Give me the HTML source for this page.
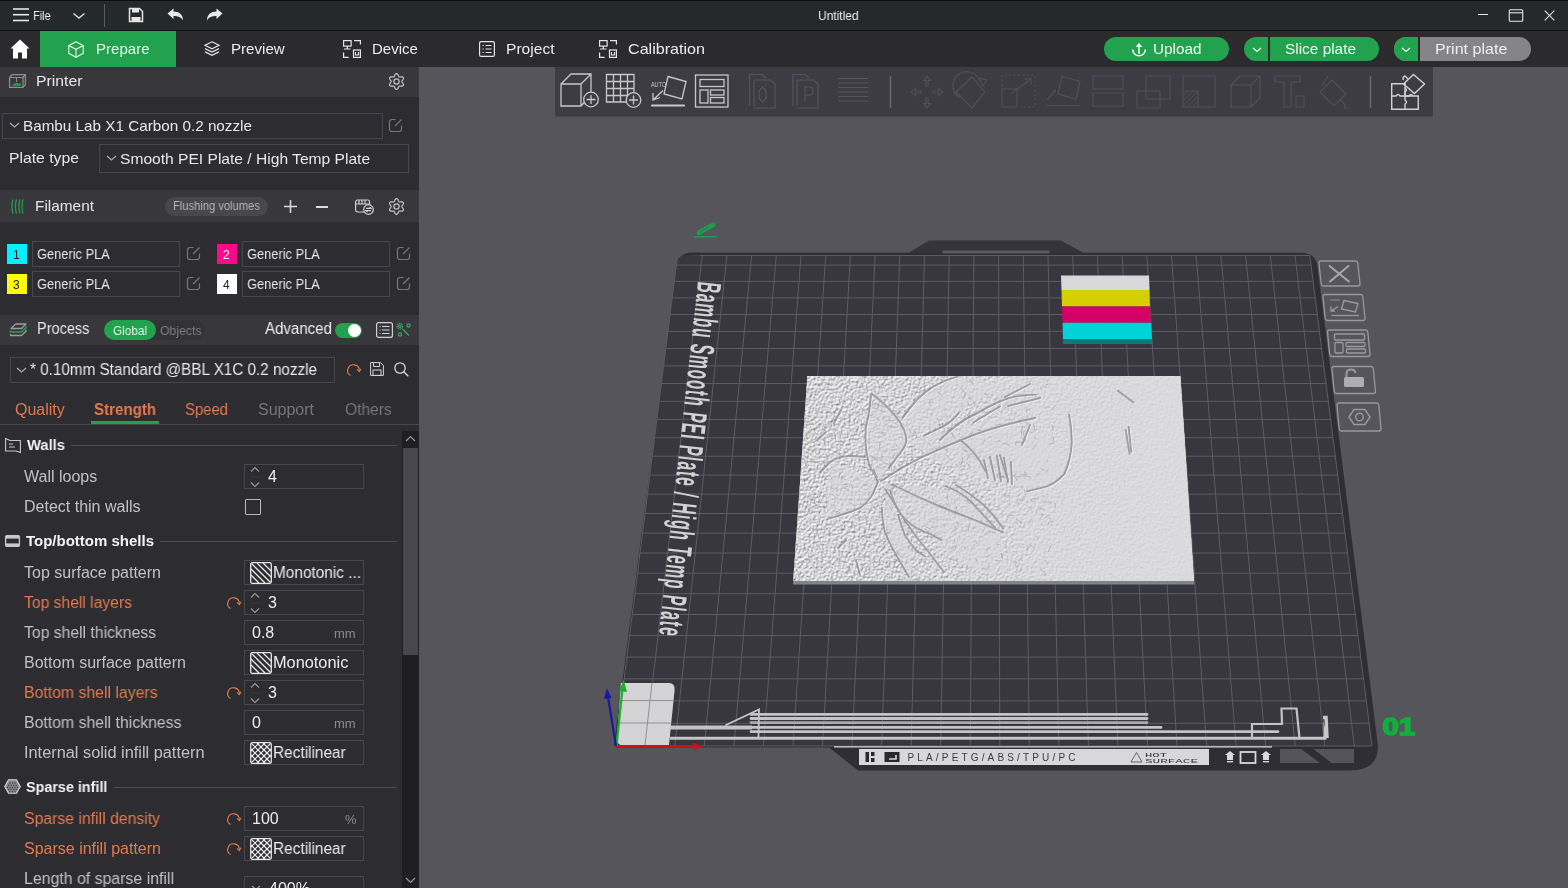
<!DOCTYPE html>
<html><head><meta charset="utf-8">
<style>
*{margin:0;padding:0;box-sizing:border-box}
html,body{width:1568px;height:888px;overflow:hidden;background:#57555c;font-family:"Liberation Sans",sans-serif;}
.a{position:absolute}
#title{left:0;top:0;width:1568px;height:30px;background:#25282a}
#tsep{left:0;top:30px;width:1568px;height:1px;background:#111213}
#tabs{left:0;top:31px;width:1568px;height:36px;background:#2b2b2e}
#left{left:0;top:67px;width:419px;height:821px;background:#2c2b30}
.t{position:absolute;white-space:nowrap;line-height:1;will-change:transform}
.hdr{position:absolute;left:0;width:419px;height:31px;background:#37363b}
.box{position:absolute;border:1px solid #48474d}
.lbl{position:absolute;white-space:nowrap;line-height:1;font-size:15px;color:#bcbcbc}
.org{color:#e27a4f}
.val{position:absolute;white-space:nowrap;line-height:1;font-size:15px;color:#e6e6e6}
svg{position:absolute;overflow:visible}
</style></head><body>
<div class="a" style="left:0px;top:0px;width:1568px;height:30px;background:#26292b;"></div>
<div class="a" style="left:0px;top:30px;width:1568px;height:1px;background:#121314;"></div>
<div class="a" style="left:0px;top:31px;width:1568px;height:36px;background:#2b2b2e;"></div>
<svg style="left:13px;top:8px" width="17" height="14" viewBox="0 0 17 14"><g stroke="#e8e8e8" stroke-width="1.6"><line x1="0" y1="1" x2="16" y2="1"/><line x1="0" y1="6.7" x2="16" y2="6.7"/><line x1="0" y1="12.5" x2="16" y2="12.5"/></g></svg>
<div class="t" style="left:33.4px;top:9.2px;font-size:13px;color:#f0f0f0;transform:scaleX(0.840);transform-origin:0 0;">File</div>
<svg style="left:73px;top:13px" width="13" height="6" viewBox="0 0 13 6"><polyline points="0.5,0.5 6,5 11.5,0.5" fill="none" stroke="#dcdcdc" stroke-width="1.4"/></svg>
<div class="a" style="left:104px;top:4px;width:1px;height:23px;background:#5a5c5e;"></div>
<svg style="left:128px;top:7px" width="16" height="16" viewBox="0 0 16 16"><path d="M1.5 1.5h10l3 3v10h-13z" fill="none" stroke="#e6e6e6" stroke-width="1.5"/><rect x="4" y="1.5" width="7" height="4" fill="#e6e6e6"/><rect x="3.5" y="10" width="9" height="4.5" fill="#e6e6e6"/></svg>
<svg style="left:167px;top:8px" width="17" height="13" viewBox="0 0 17 13"><path d="M0.5 5.5L6.5 0.5V3.5C12 3.5 16 6.5 16 12.5C14 9 11 8 6.5 8V11z" fill="#e8e8e8"/></svg>
<svg style="left:206px;top:8px" width="17" height="13" viewBox="0 0 17 13"><path d="M16.5 5.5L10.5 0.5V3.5C5 3.5 1 6.5 1 12.5C3 9 6 8 10.5 8V11z" fill="#e8e8e8"/></svg>
<div class="t" style="left:817.7px;top:9.3px;font-size:13px;color:#eeeeee;transform:scaleX(0.923);transform-origin:0 0;">Untitled</div>
<div class="a" style="left:1478px;top:13.8px;width:10px;height:1.2px;background:#e8e8e8;"></div>
<div class="a" style="left:0px;top:0px;width:1568px;height:1px;background:#0c0c0d;"></div>
<svg style="left:1508px;top:8.5px" width="16" height="13" viewBox="0 0 16 13"><g fill="none" stroke="#e8e8e8" stroke-width="1.1"><rect x="1.3" y="0.7" width="13.4" height="11.6" rx="1"/><path d="M1.3 3.8H14.7"/></g></svg>
<svg style="left:1544px;top:10px" width="11" height="11" viewBox="0 0 11 11"><g stroke="#e0e0e0" stroke-width="1.1"><line x1="0.7" y1="0.7" x2="10.3" y2="10.3"/><line x1="10.3" y1="0.7" x2="0.7" y2="10.3"/></g></svg>
<svg style="left:10px;top:39px" width="20" height="20" viewBox="0 0 20 20"><path d="M10 0.5L0.5 9.5H3V19.5H8V13.5H12V19.5H17V9.5H19.5z" fill="#ffffff"/></svg>
<div class="a" style="left:40px;top:31px;width:136px;height:36px;background:#22a14f;"></div>
<svg style="left:68px;top:41px" width="16" height="17" viewBox="0 0 16 17"><g fill="none" stroke="#d9f5dc" stroke-width="1.2"><path d="M8 0.8L15.2 4.6V12.4L8 16.2L0.8 12.4V4.6z"/><path d="M0.8 4.6L8 8.4L15.2 4.6M8 8.4V16.2"/></g></svg>
<div class="t" style="left:95.7px;top:41.3px;font-size:15px;color:#e2f7e4;transform:scaleX(1.003);transform-origin:0 0;">Prepare</div>
<svg style="left:204px;top:41px" width="16" height="16" viewBox="0 0 16 16"><g fill="none" stroke="#e6e6e6" stroke-width="1.2"><path d="M8 0.8L15 4.3L8 7.8L1 4.3z"/><path d="M1 7.6L8 11.1L15 7.6"/><path d="M1 10.9L8 14.4L15 10.9"/></g></svg>
<div class="t" style="left:231.4px;top:41.3px;font-size:15px;color:#ececec;transform:scaleX(1.008);transform-origin:0 0;">Preview</div>
<svg style="left:343px;top:40px" width="18" height="18" viewBox="0 0 18 18"><g fill="none" stroke="#e6e6e6" stroke-width="1.2"><rect x="0.6" y="0.6" width="7.5" height="5.5"/><path d="M4.3 6.1V9M1 9h6.5"/><path d="M11 0.6h6.4v4M0.6 12.5v4.8h5"/><rect x="10.5" y="10" width="6.9" height="7.4"/><path d="M12.5 12v3h3v-3"/></g></svg>
<div class="t" style="left:371.5px;top:41.3px;font-size:15px;color:#ececec;transform:scaleX(0.992);transform-origin:0 0;">Device</div>
<svg style="left:479px;top:41px" width="16" height="16" viewBox="0 0 16 16"><g fill="none" stroke="#e6e6e6" stroke-width="1.2"><rect x="0.6" y="0.6" width="14.8" height="14.8" rx="1.5"/><path d="M3.5 4.5h1.2M6.5 4.5h6M3.5 8h1.2M6.5 8h6M3.5 11.5h1.2M6.5 11.5h6"/></g></svg>
<div class="t" style="left:506.0px;top:41.3px;font-size:15px;color:#ececec;transform:scaleX(1.039);transform-origin:0 0;">Project</div>
<svg style="left:599px;top:40px" width="18" height="18" viewBox="0 0 18 18"><g fill="none" stroke="#e6e6e6" stroke-width="1.2"><rect x="0.6" y="0.6" width="7.5" height="5.5"/><path d="M4.3 6.1V9M1 9h6.5"/><path d="M11 0.6h6.4v4M0.6 12.5v4.8h5"/><rect x="10.5" y="10" width="6.9" height="7.4"/><path d="M12.5 12v3h3v-3"/></g></svg>
<div class="t" style="left:628.0px;top:41.3px;font-size:15px;color:#ececec;transform:scaleX(1.074);transform-origin:0 0;">Calibration</div>
<div class="a" style="left:1104px;top:37px;width:125px;height:24px;border-radius:12px;background:#22a14f"></div>
<svg style="left:1131px;top:42px" width="16" height="15" viewBox="0 0 16 15"><g fill="none" stroke="#eef8ee" stroke-width="1.6"><path d="M1.7 7.5A6.3 6.3 0 0 0 14.3 7.5"/><path d="M8 12V3.5"/></g><path d="M4.6 5L8 0.8L11.4 5z" fill="#eef8ee"/></svg>
<div class="t" style="left:1152.5px;top:41.2px;font-size:15px;color:#f4f4f4;transform:scaleX(1.020);transform-origin:0 0;">Upload</div>
<div class="a" style="left:1244px;top:37px;width:135px;height:24px;border-radius:12px;background:#22a14f"></div>
<div class="a" style="left:1268px;top:37px;width:2px;height:24px;background:#2b2b2e;"></div>
<svg style="left:1252px;top:47px" width="10" height="6" viewBox="0 0 10 6"><polyline points="1,1 5,4.5 9,1" fill="none" stroke="#f0f0f0" stroke-width="1.3"/></svg>
<div class="t" style="left:1285.0px;top:41.2px;font-size:15px;color:#f4f4f4;transform:scaleX(1.026);transform-origin:0 0;">Slice plate</div>
<div class="a" style="left:1394px;top:37px;width:137px;height:24px;border-radius:12px;background:#858487"></div>
<div class="a" style="left:1394px;top:37px;width:24px;height:24px;border-radius:12px 0 0 12px;background:#22a14f"></div>
<div class="a" style="left:1418px;top:37px;width:2px;height:24px;background:#2b2b2e;"></div>
<svg style="left:1401px;top:47px" width="10" height="6" viewBox="0 0 10 6"><polyline points="1,1 5,4.5 9,1" fill="none" stroke="#f0f0f0" stroke-width="1.3"/></svg>
<div class="t" style="left:1435.4px;top:41.2px;font-size:15px;color:#eeeeee;transform:scaleX(1.071);transform-origin:0 0;">Print plate</div>
<div class="a" style="left:0px;top:67px;width:419px;height:821px;background:#2d2c31;"></div>
<div class="a" style="left:0px;top:67px;width:419px;height:30px;background:#38373c;"></div>
<svg style="left:9px;top:74px" width="17" height="14" viewBox="0 0 17 14"><g fill="none" stroke="#8e8e92" stroke-width="1.2"><path d="M0.6 3.5L3 0.6H16.4V10.5L14 13.4H0.6z"/><path d="M0.6 3.5H14V13.4M14 3.5L16.4 0.6"/></g><path d="M3 11.5Q6 8 10 9.5H12V11.8H3z" fill="#22a14f"/><path d="M7.5 3.5V8" stroke="#8e8e92" stroke-width="1"/></svg>
<div class="t" style="left:35.5px;top:73.3px;font-size:15px;color:#e6e6e6;transform:scaleX(1.053);transform-origin:0 0;">Printer</div>
<svg style="left:388px;top:73px" width="17" height="17" viewBox="0 0 17 17"><g fill="none" stroke="#c2c2c2" stroke-width="1.2"><polygon points="13.85,8.50 14.00,8.98 14.38,9.54 14.88,10.21 15.29,10.97 15.46,11.75 15.30,12.42 14.79,12.91 14.03,13.14 13.17,13.17 12.34,13.08 11.66,13.02 11.18,13.13 10.83,13.50 10.54,14.11 10.21,14.88 9.75,15.62 9.17,16.15 8.50,16.35 7.83,16.15 7.25,15.62 6.79,14.88 6.46,14.11 6.17,13.50 5.83,13.13 5.34,13.02 4.66,13.08 3.83,13.17 2.97,13.14 2.21,12.91 1.70,12.43 1.54,11.75 1.71,10.97 2.12,10.21 2.62,9.54 3.00,8.98 3.15,8.50 3.00,8.02 2.62,7.46 2.12,6.79 1.71,6.03 1.54,5.25 1.70,4.57 2.21,4.09 2.97,3.86 3.83,3.83 4.66,3.92 5.34,3.98 5.82,3.87 6.17,3.50 6.46,2.89 6.79,2.12 7.25,1.38 7.83,0.85 8.50,0.65 9.17,0.85 9.75,1.38 10.21,2.12 10.54,2.89 10.83,3.50 11.17,3.87 11.66,3.98 12.34,3.92 13.17,3.83 14.03,3.86 14.79,4.09 15.30,4.58 15.46,5.25 15.29,6.03 14.88,6.79 14.38,7.46 14.00,8.02 13.85,8.50"/><circle cx="8.5" cy="8.5" r="2.6"/></g></svg>
<div class="box" style="left:2px;top:113px;width:381px;height:26px"></div>
<svg style="left:9px;top:122px" width="12" height="7" viewBox="0 0 12 7"><polyline points="1,1 5.5,5 10,1" fill="none" stroke="#b0b0b0" stroke-width="1.1"/></svg>
<div class="t" style="left:23.4px;top:118.3px;font-size:15px;color:#e8e8e8;transform:scaleX(1.017);transform-origin:0 0;">Bambu Lab X1 Carbon 0.2 nozzle</div>
<svg style="left:388px;top:118px" width="15" height="15" viewBox="0 0 15 15"><g fill="none" stroke="#77767b" stroke-width="1.2"><path d="M7.5 1.5H4Q1.5 1.5 1.5 4V11Q1.5 13.5 4 13.5H11Q13.5 13.5 13.5 11V7.5"/><path d="M7 8L13.5 1.5"/></g></svg>
<div class="t" style="left:9.4px;top:150.1px;font-size:15px;color:#e8e8e8;transform:scaleX(1.049);transform-origin:0 0;">Plate type</div>
<div class="box" style="left:99px;top:144px;width:310px;height:29px"></div>
<svg style="left:106px;top:155px" width="12" height="7" viewBox="0 0 12 7"><polyline points="1,1 5.5,5 10,1" fill="none" stroke="#b0b0b0" stroke-width="1.1"/></svg>
<div class="t" style="left:119.5px;top:151.1px;font-size:15px;color:#e8e8e8;transform:scaleX(1.039);transform-origin:0 0;">Smooth PEI Plate / High Temp Plate</div>
<div class="a" style="left:0px;top:190px;width:419px;height:32px;background:#38373c;"></div>
<svg style="left:10px;top:198px" width="14" height="17" viewBox="0 0 14 17"><g fill="none" stroke="#22a14f" stroke-width="1.3"><path d="M3 1.5Q0.8 8.5 3 15.5M6.5 1.5Q4.3 8.5 6.5 15.5M10 1.5Q7.8 8.5 10 15.5M13 1.5Q11 8.5 13 15.5"/></g></svg>
<div class="t" style="left:35.0px;top:198.3px;font-size:15px;color:#e6e6e6;transform:scaleX(1.026);transform-origin:0 0;">Filament</div>
<div class="a" style="left:165px;top:197px;width:103px;height:19px;border-radius:9.5px;background:#48474c"></div>
<div class="t" style="left:173.0px;top:199.8px;font-size:12px;color:#b5b5b5;transform:scaleX(0.930);transform-origin:0 0;">Flushing volumes</div>
<svg style="left:284px;top:200px" width="13" height="13" viewBox="0 0 13 13"><g stroke="#dedede" stroke-width="1.5"><line x1="6.5" y1="0" x2="6.5" y2="13"/><line x1="0" y1="6.5" x2="13" y2="6.5"/></g></svg>
<div class="a" style="left:316px;top:206px;width:12px;height:1.5px;background:#dedede;"></div>
<svg style="left:355px;top:198px" width="19" height="17" viewBox="0 0 19 17"><g fill="none" stroke="#d0d0d0" stroke-width="1.2"><rect x="0.6" y="2" width="14" height="12" rx="2"/><path d="M0.6 6H14.6M4 2V6M7 2V6M10 2V6"/><circle cx="13.5" cy="11.5" r="4.8" fill="#37363b"/><path d="M11 10.3H16L14.5 9M16 12.7H11L12.5 14"/></g></svg>
<svg style="left:388px;top:198px" width="17" height="17" viewBox="0 0 17 17"><g fill="none" stroke="#c2c2c2" stroke-width="1.2"><polygon points="13.85,8.50 14.00,8.98 14.38,9.54 14.88,10.21 15.29,10.97 15.46,11.75 15.30,12.42 14.79,12.91 14.03,13.14 13.17,13.17 12.34,13.08 11.66,13.02 11.18,13.13 10.83,13.50 10.54,14.11 10.21,14.88 9.75,15.62 9.17,16.15 8.50,16.35 7.83,16.15 7.25,15.62 6.79,14.88 6.46,14.11 6.17,13.50 5.83,13.13 5.34,13.02 4.66,13.08 3.83,13.17 2.97,13.14 2.21,12.91 1.70,12.43 1.54,11.75 1.71,10.97 2.12,10.21 2.62,9.54 3.00,8.98 3.15,8.50 3.00,8.02 2.62,7.46 2.12,6.79 1.71,6.03 1.54,5.25 1.70,4.57 2.21,4.09 2.97,3.86 3.83,3.83 4.66,3.92 5.34,3.98 5.82,3.87 6.17,3.50 6.46,2.89 6.79,2.12 7.25,1.38 7.83,0.85 8.50,0.65 9.17,0.85 9.75,1.38 10.21,2.12 10.54,2.89 10.83,3.50 11.17,3.87 11.66,3.98 12.34,3.92 13.17,3.83 14.03,3.86 14.79,4.09 15.30,4.58 15.46,5.25 15.29,6.03 14.88,6.79 14.38,7.46 14.00,8.02 13.85,8.50"/><circle cx="8.5" cy="8.5" r="2.6"/></g></svg>
<div class="a" style="left:7px;top:244px;width:20px;height:20px;background:#00f0fc;"></div>
<div class="t" style="left:13.3px;top:248.8px;font-size:12px;color:#222;">1</div>
<div class="box" style="left:32px;top:241px;width:148px;height:26px"></div>
<div class="t" style="left:37.0px;top:246.1px;font-size:15px;color:#e6e6e6;transform:scaleX(0.856);transform-origin:0 0;">Generic PLA</div>
<svg style="left:186px;top:246px" width="15" height="15" viewBox="0 0 15 15"><g fill="none" stroke="#77767b" stroke-width="1.2"><path d="M7.5 1.5H4Q1.5 1.5 1.5 4V11Q1.5 13.5 4 13.5H11Q13.5 13.5 13.5 11V7.5"/><path d="M7 8L13.5 1.5"/></g></svg>
<div class="a" style="left:217px;top:244px;width:20px;height:20px;background:#fc0a8a;"></div>
<div class="t" style="left:223.3px;top:248.8px;font-size:12px;color:#fff;">2</div>
<div class="box" style="left:242px;top:241px;width:148px;height:26px"></div>
<div class="t" style="left:247.0px;top:246.1px;font-size:15px;color:#e6e6e6;transform:scaleX(0.856);transform-origin:0 0;">Generic PLA</div>
<svg style="left:396px;top:246px" width="15" height="15" viewBox="0 0 15 15"><g fill="none" stroke="#77767b" stroke-width="1.2"><path d="M7.5 1.5H4Q1.5 1.5 1.5 4V11Q1.5 13.5 4 13.5H11Q13.5 13.5 13.5 11V7.5"/><path d="M7 8L13.5 1.5"/></g></svg>
<div class="a" style="left:7px;top:274px;width:20px;height:20px;background:#fcfc00;"></div>
<div class="t" style="left:13.3px;top:278.8px;font-size:12px;color:#222;">3</div>
<div class="box" style="left:32px;top:271px;width:148px;height:26px"></div>
<div class="t" style="left:37.0px;top:276.1px;font-size:15px;color:#e6e6e6;transform:scaleX(0.856);transform-origin:0 0;">Generic PLA</div>
<svg style="left:186px;top:276px" width="15" height="15" viewBox="0 0 15 15"><g fill="none" stroke="#77767b" stroke-width="1.2"><path d="M7.5 1.5H4Q1.5 1.5 1.5 4V11Q1.5 13.5 4 13.5H11Q13.5 13.5 13.5 11V7.5"/><path d="M7 8L13.5 1.5"/></g></svg>
<div class="a" style="left:217px;top:274px;width:20px;height:20px;background:#ffffff;"></div>
<div class="t" style="left:223.3px;top:278.8px;font-size:12px;color:#222;">4</div>
<div class="box" style="left:242px;top:271px;width:148px;height:26px"></div>
<div class="t" style="left:247.0px;top:276.1px;font-size:15px;color:#e6e6e6;transform:scaleX(0.856);transform-origin:0 0;">Generic PLA</div>
<svg style="left:396px;top:276px" width="15" height="15" viewBox="0 0 15 15"><g fill="none" stroke="#77767b" stroke-width="1.2"><path d="M7.5 1.5H4Q1.5 1.5 1.5 4V11Q1.5 13.5 4 13.5H11Q13.5 13.5 13.5 11V7.5"/><path d="M7 8L13.5 1.5"/></g></svg>
<div class="a" style="left:0px;top:315px;width:419px;height:30px;background:#38373c;"></div>
<svg style="left:9px;top:321px" width="18" height="17" viewBox="0 0 18 17"><g fill="none" stroke-width="1.3" stroke-linejoin="round"><path d="M2 7.5L6.5 3H17L12.5 7.5z" stroke="#9a9a9e"/><path d="M1.5 9.5V11H12.5L17 6.8V5.5" stroke="#22a14f" stroke-width="1.6"/><path d="M1.5 13V14.5H12.5L17 10.3V9" stroke="#9a9a9e"/></g></svg>
<div class="t" style="left:37.3px;top:320.7px;font-size:16px;color:#e6e6e6;transform:scaleX(0.907);transform-origin:0 0;">Process</div>
<div class="a" style="left:104px;top:320px;width:101px;height:20px;border-radius:10px;background:#333237"></div>
<div class="a" style="left:104px;top:320px;width:52px;height:20px;border-radius:10px;background:#22a14f"></div>
<div class="t" style="left:113.0px;top:323.5px;font-size:13px;color:#e4f5e6;transform:scaleX(0.905);transform-origin:0 0;">Global</div>
<div class="t" style="left:159.5px;top:323.5px;font-size:13px;color:#7d7d80;transform:scaleX(0.942);transform-origin:0 0;">Objects</div>
<div class="t" style="left:265.4px;top:321.0px;font-size:16px;color:#eeeeee;transform:scaleX(0.941);transform-origin:0 0;">Advanced</div>
<div class="a" style="left:335px;top:322.5px;width:27px;height:15px;border-radius:7.5px;background:#22a14f"></div>
<div class="a" style="left:348px;top:323.5px;width:13px;height:13px;border-radius:6.5px;background:#ffffff"></div>
<svg style="left:376px;top:322px" width="17" height="16" viewBox="0 0 17 16"><g fill="none" stroke="#d0d0d0" stroke-width="1.2"><rect x="0.6" y="0.6" width="15.8" height="14.8" rx="2"/><path d="M3.5 4.5h1M6 4.5h7.5M3.5 8h1M6 8h7.5M3.5 11.5h1M6 11.5h7.5"/></g></svg>
<svg style="left:396px;top:322px" width="15" height="16" viewBox="0 0 15 16"><g fill="none" stroke="#3aa862" stroke-width="1.2"><circle cx="3.8" cy="4.2" r="2.8" stroke-dasharray="1.6 0.8"/><circle cx="3.8" cy="4.2" r="1.2"/><circle cx="12.5" cy="3.5" r="1.6"/><circle cx="4" cy="12.5" r="1.6"/><path d="M6.5 7L13 13.5"/></g></svg>
<div class="box" style="left:9.5px;top:357px;width:325px;height:26px"></div>
<svg style="left:16px;top:367px" width="12" height="7" viewBox="0 0 12 7"><polyline points="1,1 5.5,5 10,1" fill="none" stroke="#b0b0b0" stroke-width="1.1"/></svg>
<div class="t" style="left:30.0px;top:361.9px;font-size:16px;color:#e8e8e8;transform:scaleX(0.953);transform-origin:0 0;">* 0.10mm Standard @BBL X1C 0.2 nozzle</div>
<svg style="left:345.5px;top:362.5px" width="15" height="15" viewBox="0 0 15 15"><g fill="none" stroke="#e27a4f" stroke-width="1.1"><path d="M4.6 12.6A5.8 5.8 0 1 1 13.3 7.8"/><polyline points="11,6.4 13.3,8.6 15,5.8"/></g></svg>
<svg style="left:370px;top:362px" width="14" height="14" viewBox="0 0 14 14"><g fill="none" stroke="#d6d6d6" stroke-width="1"><path d="M0.6 0.6H10.5L13.4 3.5V13.4H0.6z"/><path d="M3.5 0.6V4.5H9.5V0.6"/><rect x="3" y="8" width="8" height="5.4"/></g></svg>
<svg style="left:394px;top:362px" width="15" height="15" viewBox="0 0 15 15"><g fill="none" stroke="#d6d6d6" stroke-width="1.3"><circle cx="6" cy="6" r="5.2"/><path d="M9.8 9.8L14.3 14.3"/></g></svg>
<div class="t" style="left:15.4px;top:401.6px;font-size:16px;color:#e27a4f;transform:scaleX(0.994);transform-origin:0 0;">Quality</div>
<div class="t" style="left:94.0px;top:401.6px;font-size:16px;color:#e27a4f;font-weight:bold;transform:scaleX(0.943);transform-origin:0 0;">Strength</div>
<div class="t" style="left:185.0px;top:401.6px;font-size:16px;color:#e27a4f;transform:scaleX(0.929);transform-origin:0 0;">Speed</div>
<div class="t" style="left:258.0px;top:401.6px;font-size:16px;color:#75757a;transform:scaleX(0.999);transform-origin:0 0;">Support</div>
<div class="t" style="left:345.4px;top:401.6px;font-size:16px;color:#75757a;transform:scaleX(0.971);transform-origin:0 0;">Others</div>
<div class="a" style="left:0px;top:424px;width:419px;height:1px;background:#47464c;"></div>
<div class="a" style="left:91px;top:420.5px;width:68px;height:3.5px;background:#22a14f;"></div>
<div class="a" style="left:402px;top:431px;width:17px;height:457px;background:#1f1f23;"></div>
<div class="a" style="left:403px;top:448px;width:15px;height:207px;background:#48474d;"></div>
<svg style="left:405px;top:435px" width="11" height="7" viewBox="0 0 11 7"><polyline points="1,6 5.5,1.5 10,6" fill="none" stroke="#9a9a9a" stroke-width="1.2"/></svg>
<svg style="left:405px;top:877px" width="11" height="7" viewBox="0 0 11 7"><polyline points="1,1 5.5,5.5 10,1" fill="none" stroke="#9a9a9a" stroke-width="1.2"/></svg>
<svg style="left:5px;top:438px" width="16" height="15" viewBox="0 0 16 15"><g fill="none" stroke="#c8c8c8" stroke-width="1.1"><path d="M0.6 0.6L5 2.5H15.4V14.4L11 13H0.6z"/><path d="M4 6h4M4 9h6"/></g></svg>
<div class="t" style="left:27.0px;top:436.8px;font-size:15px;color:#f2f2f2;font-weight:bold;transform:scaleX(0.984);transform-origin:0 0;">Walls</div>
<div class="a" style="left:71px;top:445px;width:326px;height:1px;background:#4b4a50;"></div>
<div class="t" style="left:24.3px;top:468.7px;font-size:16px;color:#c2c2c2;">Wall loops</div>
<div class="box" style="left:244px;top:464.3px;width:120px;height:25px"></div>
<svg style="left:248.5px;top:465.8px" width="12" height="22" viewBox="0 0 12 22"><g fill="none" stroke="#9a9a9e" stroke-width="1.1"><polyline points="2,5.5 6,1.5 10,5.5"/><polyline points="2,16.5 6,20.5 10,16.5"/><path d="M1 11H11" stroke="#3c3b41" stroke-width="0.8"/></g></svg>
<div class="t" style="left:268.0px;top:469.1px;font-size:16px;color:#ececec;">4</div>
<div class="t" style="left:24.3px;top:498.7px;font-size:16px;color:#c2c2c2;transform:scaleX(1.000);transform-origin:0 0;">Detect thin walls</div>
<div class="a" style="left:245px;top:499px;width:16px;height:16px;border:1.2px solid #b8b8b8;border-radius:1px"></div>
<svg style="left:5px;top:535px" width="15" height="12" viewBox="0 0 15 12"><g fill="none" stroke="#c8c8c8" stroke-width="1.3"><rect x="0.6" y="0.6" width="13.8" height="10.8" rx="1.5"/></g><rect x="0.6" y="0.6" width="13.8" height="3" fill="#c8c8c8"/><rect x="0.6" y="8.4" width="13.8" height="3" fill="#c8c8c8"/></svg>
<div class="t" style="left:26.2px;top:532.8px;font-size:15px;color:#f2f2f2;font-weight:bold;transform:scaleX(1.000);transform-origin:0 0;">Top/bottom shells</div>
<div class="a" style="left:159.5px;top:541px;width:237px;height:1px;background:#4b4a50;"></div>
<div class="t" style="left:24.3px;top:564.6px;font-size:16px;color:#c2c2c2;transform:scaleX(0.997);transform-origin:0 0;">Top surface pattern</div>
<div class="box" style="left:244px;top:560.2px;width:120px;height:25px"></div>
<svg style="left:250px;top:561.7px" width="22" height="22" viewBox="0 0 22 22"><g fill="none" stroke="#e8e8e8" stroke-width="1.3"><rect x="0.7" y="0.7" width="20.6" height="20.6" rx="1.5"/><path d="M7 1L21 15M1.5 1.5L20.5 20.5M1 7L15 21M13 1L21 9M1 13L9 21"/></g></svg>
<div class="t" style="left:273.0px;top:565.0px;font-size:16px;color:#ececec;transform:scaleX(0.961);transform-origin:0 0;">Monotonic ...</div>
<div class="t" style="left:24.3px;top:594.7px;font-size:16px;color:#e27a4f;transform:scaleX(0.979);transform-origin:0 0;">Top shell layers</div>
<svg style="left:226px;top:595.8px" width="15" height="15" viewBox="0 0 15 15"><g fill="none" stroke="#e27a4f" stroke-width="1.1"><path d="M4.6 12.6A5.8 5.8 0 1 1 13.3 7.8"/><polyline points="11,6.4 13.3,8.6 15,5.8"/></g></svg>
<div class="box" style="left:244px;top:590.3px;width:120px;height:25px"></div>
<svg style="left:248.5px;top:591.8px" width="12" height="22" viewBox="0 0 12 22"><g fill="none" stroke="#9a9a9e" stroke-width="1.1"><polyline points="2,5.5 6,1.5 10,5.5"/><polyline points="2,16.5 6,20.5 10,16.5"/><path d="M1 11H11" stroke="#3c3b41" stroke-width="0.8"/></g></svg>
<div class="t" style="left:268.0px;top:595.1px;font-size:16px;color:#ececec;">3</div>
<div class="t" style="left:24.3px;top:624.7px;font-size:16px;color:#c2c2c2;transform:scaleX(0.983);transform-origin:0 0;">Top shell thickness</div>
<div class="box" style="left:244px;top:620.3px;width:120px;height:25px"></div>
<div class="t" style="left:252.0px;top:625.1px;font-size:16px;color:#ececec;">0.8</div>
<div class="t" style="left:334.0px;top:627.3px;font-size:13px;color:#8a8a8e;">mm</div>
<div class="t" style="left:24.3px;top:654.8px;font-size:16px;color:#c2c2c2;transform:scaleX(1.001);transform-origin:0 0;">Bottom surface pattern</div>
<div class="box" style="left:244px;top:650.4px;width:120px;height:25px"></div>
<svg style="left:250px;top:651.9px" width="22" height="22" viewBox="0 0 22 22"><g fill="none" stroke="#e8e8e8" stroke-width="1.3"><rect x="0.7" y="0.7" width="20.6" height="20.6" rx="1.5"/><path d="M7 1L21 15M1.5 1.5L20.5 20.5M1 7L15 21M13 1L21 9M1 13L9 21"/></g></svg>
<div class="t" style="left:273.0px;top:655.2px;font-size:16px;color:#ececec;transform:scaleX(1.020);transform-origin:0 0;">Monotonic</div>
<div class="t" style="left:24.3px;top:684.5px;font-size:16px;color:#e27a4f;transform:scaleX(0.988);transform-origin:0 0;">Bottom shell layers</div>
<svg style="left:226px;top:685.6px" width="15" height="15" viewBox="0 0 15 15"><g fill="none" stroke="#e27a4f" stroke-width="1.1"><path d="M4.6 12.6A5.8 5.8 0 1 1 13.3 7.8"/><polyline points="11,6.4 13.3,8.6 15,5.8"/></g></svg>
<div class="box" style="left:244px;top:680.1px;width:120px;height:25px"></div>
<svg style="left:248.5px;top:681.6px" width="12" height="22" viewBox="0 0 12 22"><g fill="none" stroke="#9a9a9e" stroke-width="1.1"><polyline points="2,5.5 6,1.5 10,5.5"/><polyline points="2,16.5 6,20.5 10,16.5"/><path d="M1 11H11" stroke="#3c3b41" stroke-width="0.8"/></g></svg>
<div class="t" style="left:268.0px;top:684.9px;font-size:16px;color:#ececec;">3</div>
<div class="t" style="left:24.3px;top:714.8px;font-size:16px;color:#c2c2c2;transform:scaleX(0.989);transform-origin:0 0;">Bottom shell thickness</div>
<div class="box" style="left:244px;top:710.4px;width:120px;height:25px"></div>
<div class="t" style="left:252.0px;top:715.2px;font-size:16px;color:#ececec;">0</div>
<div class="t" style="left:334.0px;top:717.4px;font-size:13px;color:#8a8a8e;">mm</div>
<div class="t" style="left:24.3px;top:744.5px;font-size:16px;color:#c2c2c2;transform:scaleX(1.020);transform-origin:0 0;">Internal solid infill pattern</div>
<div class="box" style="left:244px;top:740.1px;width:120px;height:25px"></div>
<svg style="left:250px;top:741.6px" width="22" height="22" viewBox="0 0 22 22"><g fill="none" stroke="#e8e8e8" stroke-width="1.2"><rect x="0.7" y="0.7" width="20.6" height="20.6" rx="1.5"/><path d="M7 1L21 15M1.5 1.5L20.5 20.5M1 7L15 21M13 1L21 9M1 13L9 21"/><path d="M15 1L1 15M20.5 1.5L1.5 20.5M21 7L7 21M9 1L1 9M21 13L13 21"/></g></svg>
<div class="t" style="left:273.0px;top:744.9px;font-size:16px;color:#ececec;transform:scaleX(0.962);transform-origin:0 0;">Rectilinear</div>
<svg style="left:4px;top:779px" width="17" height="15" viewBox="0 0 17 15"><path d="M4.5 0.7H12.5L16.3 7.5L12.5 14.3H4.5L0.7 7.5z" fill="#8a8a8e" stroke="#d4d4d4" stroke-width="1.1"/><g fill="#3a393e"><circle cx="6.0" cy="4.0" r="0.75"/><circle cx="8.5" cy="4.0" r="0.75"/><circle cx="11.0" cy="4.0" r="0.75"/><circle cx="4.7" cy="6.2" r="0.75"/><circle cx="7.2" cy="6.2" r="0.75"/><circle cx="9.7" cy="6.2" r="0.75"/><circle cx="12.2" cy="6.2" r="0.75"/><circle cx="3.5" cy="8.4" r="0.75"/><circle cx="6.0" cy="8.4" r="0.75"/><circle cx="8.5" cy="8.4" r="0.75"/><circle cx="11.0" cy="8.4" r="0.75"/><circle cx="13.5" cy="8.4" r="0.75"/><circle cx="4.7" cy="10.6" r="0.75"/><circle cx="7.2" cy="10.6" r="0.75"/><circle cx="9.7" cy="10.6" r="0.75"/><circle cx="12.2" cy="10.6" r="0.75"/><circle cx="6.0" cy="12.8" r="0.75"/><circle cx="8.5" cy="12.8" r="0.75"/><circle cx="11.0" cy="12.8" r="0.75"/></g></svg>
<div class="t" style="left:26.2px;top:778.7px;font-size:15px;color:#f2f2f2;font-weight:bold;transform:scaleX(0.957);transform-origin:0 0;">Sparse infill</div>
<div class="a" style="left:113.5px;top:787px;width:283px;height:1px;background:#4b4a50;"></div>
<div class="t" style="left:24.3px;top:810.7px;font-size:16px;color:#e27a4f;transform:scaleX(0.987);transform-origin:0 0;">Sparse infill density</div>
<svg style="left:226px;top:811.8px" width="15" height="15" viewBox="0 0 15 15"><g fill="none" stroke="#e27a4f" stroke-width="1.1"><path d="M4.6 12.6A5.8 5.8 0 1 1 13.3 7.8"/><polyline points="11,6.4 13.3,8.6 15,5.8"/></g></svg>
<div class="box" style="left:244px;top:806.3px;width:120px;height:25px"></div>
<div class="t" style="left:252.0px;top:811.1px;font-size:16px;color:#ececec;">100</div>
<div class="t" style="left:344.6px;top:813.3px;font-size:13px;color:#8a8a8e;">%</div>
<div class="t" style="left:24.3px;top:840.7px;font-size:16px;color:#e27a4f;transform:scaleX(0.997);transform-origin:0 0;">Sparse infill pattern</div>
<svg style="left:226px;top:841.8px" width="15" height="15" viewBox="0 0 15 15"><g fill="none" stroke="#e27a4f" stroke-width="1.1"><path d="M4.6 12.6A5.8 5.8 0 1 1 13.3 7.8"/><polyline points="11,6.4 13.3,8.6 15,5.8"/></g></svg>
<div class="box" style="left:244px;top:836.3px;width:120px;height:25px"></div>
<svg style="left:250px;top:837.8px" width="22" height="22" viewBox="0 0 22 22"><g fill="none" stroke="#e8e8e8" stroke-width="1.2"><rect x="0.7" y="0.7" width="20.6" height="20.6" rx="1.5"/><path d="M7 1L21 15M1.5 1.5L20.5 20.5M1 7L15 21M13 1L21 9M1 13L9 21"/><path d="M15 1L1 15M20.5 1.5L1.5 20.5M21 7L7 21M9 1L1 9M21 13L13 21"/></g></svg>
<div class="t" style="left:273.0px;top:841.1px;font-size:16px;color:#ececec;transform:scaleX(0.962);transform-origin:0 0;">Rectilinear</div>
<div class="t" style="left:24.3px;top:870.5px;font-size:16px;color:#c2c2c2;transform:scaleX(0.992);transform-origin:0 0;">Length of sparse infill</div>
<div class="box" style="left:244px;top:876px;width:120px;height:25px"></div>
<svg style="left:251px;top:885px" width="10" height="6" viewBox="0 0 10 6"><polyline points="1,1 5,4.5 9,1" fill="none" stroke="#9a9a9e" stroke-width="1.2"/></svg>
<div class="t" style="left:269.0px;top:881.0px;font-size:16px;color:#ececec;">400%</div>
<svg style="left:420px;top:67px;will-change:transform" width="1148" height="821" viewBox="420 67 1148 821"><path d="M555 67H1433V114Q1433 116.6 1430.4 116.6H557.6Q555 116.6 555 114z" fill="#3c3c42"/><path d="M690 252.8H909L929 240.8H1061L1083 252.8H1303Q1314 253 1317 263L1377.5 742Q1381 770 1350 770.4H858L829 747.5H617L614 745L677 263Q679 254 690 252.8z" fill="#2f2e35"/><polygon points="615.7,746.0 1372.0,746.0 1309.8,255.5 677.5,255.5" fill="#38363e"/><path d="M615.7 746.0L677.5 255.5M645.2 746.0L702.2 255.5M674.8 746.0L726.9 255.5M704.3 746.0L751.6 255.5M733.9 746.0L776.3 255.5M763.4 746.0L801.0 255.5M793.0 746.0L825.7 255.5M822.5 746.0L850.4 255.5M852.0 746.0L875.1 255.5M881.6 746.0L899.8 255.5M911.1 746.0L924.5 255.5M940.7 746.0L949.2 255.5M970.2 746.0L973.9 255.5M999.8 746.0L998.6 255.5M1029.3 746.0L1023.3 255.5M1058.8 746.0L1048.0 255.5M1088.4 746.0L1072.7 255.5M1117.9 746.0L1097.4 255.5M1147.5 746.0L1122.1 255.5M1177.0 746.0L1146.8 255.5M1206.6 746.0L1171.5 255.5M1236.1 746.0L1196.2 255.5M1265.6 746.0L1220.9 255.5M1295.2 746.0L1245.6 255.5M1324.7 746.0L1270.3 255.5M1354.3 746.0L1295.0 255.5M1372.0 746.0L1309.8 255.5M615.7 746.0L1372.0 746.0M618.6 723.3L1369.1 723.3M621.4 700.9L1366.3 700.9M624.2 678.8L1363.5 678.8M626.9 657.1L1360.7 657.1M629.6 635.6L1358.0 635.6M632.3 614.5L1355.3 614.5M634.9 593.7L1352.7 593.7M637.5 573.2L1350.1 573.2M640.0 553.0L1347.5 553.0M642.5 533.1L1345.0 533.1M645.0 513.5L1342.5 513.5M647.4 494.1L1340.1 494.1M649.8 475.1L1337.6 475.1M652.2 456.2L1335.3 456.2M654.5 437.7L1332.9 437.7M656.9 419.4L1330.6 419.4M659.1 401.3L1328.3 401.3M661.4 383.5L1326.0 383.5M663.6 365.9L1323.8 365.9M665.8 348.5L1321.6 348.5M667.9 331.4L1319.4 331.4M670.1 314.5L1317.3 314.5M672.2 297.9L1315.2 297.9M674.2 281.4L1313.1 281.4M676.3 265.1L1311.0 265.1M677.5 255.5L1309.8 255.5" stroke="#5d5c63" stroke-width="1" fill="none"/><path d="M670 240 L695 240 L690 252.8 Q679 254 677 263 L670 300z" fill="#57555c"/><path d="M1300 240 L1330 240 L1330 280 L1317 263 Q1314 253.5 1303 252.8z" fill="#57555c"/><path d="M677 263 Q679 254 690 252.8 L700 252.8 L700 255.5 L681 256z" fill="#2f2e35"/><path d="M909 252.8L929 240.8H1061L1083 252.8z" fill="#35343b"/><rect x="942" y="250.5" width="108" height="3" rx="1.5" fill="#5a5960"/><text transform="translate(698,281) rotate(96.3) scale(0.72,1.62)" font-family="Liberation Sans" font-weight="bold" font-size="21" fill="#d2d2d4" textLength="494" lengthAdjust="spacing">Bambu Smooth PEI Plate / High Temp Plate</text><polygon points="1061,275.4 1149,275.4 1149.5,290 1061.5,290" fill="#d8d8d8"/><polygon points="1061.5,290 1149.5,290 1150,306.5 1062,306.5" fill="#d4d000"/><polygon points="1062,306.5 1150,306.5 1151,322.7 1062.5,322.7" fill="#d40068"/><polygon points="1062.5,322.7 1151,322.7 1152,339 1063,339" fill="#00d3d8"/><polygon points="1063,339 1152,339 1152,344 1063,344" fill="#087c7c"/><defs><filter id="bump" x="0" y="0" width="100%" height="100%" color-interpolation-filters="sRGB"><feTurbulence type="fractalNoise" baseFrequency="0.4" numOctaves="4" seed="11" result="n"/><feDiffuseLighting in="n" surfaceScale="1.25" diffuseConstant="1.15" lighting-color="#dcdcde" result="l"><feDistantLight azimuth="235" elevation="58"/></feDiffuseLighting></filter><filter id="sb" x="-5%" y="-5%" width="110%" height="110%"><feGaussianBlur stdDeviation="0.45"/></filter><clipPath id="rc"><polygon points="807.4,375.9 1180.3,375.9 1194,581 793.2,581"/></clipPath><linearGradient id="rg" x1="0" y1="0" x2="1" y2="0"><stop offset="0" stop-color="#dadadc" stop-opacity="0.05"/><stop offset="0.35" stop-color="#dadadc" stop-opacity="0.25"/><stop offset="0.62" stop-color="#dadadc" stop-opacity="0.75"/><stop offset="1" stop-color="#dcdcde" stop-opacity="0.93"/></linearGradient></defs><polygon points="793.2,581 1194,581 1194.5,584.5 793,584.5" fill="#7d8785"/><g clip-path="url(#rc)"><rect x="790" y="372" width="410" height="215" fill="#d6d6d8"/><rect x="790" y="372" width="410" height="215" filter="url(#bump)"/><rect x="790" y="372" width="410" height="215" fill="url(#rg)"/><g fill="#d9d9db" opacity="0.55"><path d="M871 394Q866 430 867 452Q870 470 877 478Q900 460 906 441Q903 420 872 394z"/><path d="M957 377Q925 390 902 418Q906 430 906 441Q930 430 960 410Q990 395 1010 385z"/><path d="M829 518Q850 512 862 507Q873 497 878 482Q855 470 835 462Q822 480 829 518z"/><path d="M890 490Q900 515 914 527Q935 536 942 550Q925 520 905 505z"/><path d="M881 508Q884 535 895 554Q905 570 909 577Q915 555 905 535Q898 515 890 495z"/><path d="M906 441Q950 430 990 420Q1030 425 1060 445Q1064 470 1047 486Q1000 488 960 470Q930 460 906 441z"/><path d="M895 488Q930 480 965 497Q990 515 1000 540Q1000 570 990 575Q950 560 935 540Q910 510 895 488z"/></g><g fill="none" stroke="#f4f4f6" stroke-width="1.3" stroke-linecap="round" opacity="0.8" transform="translate(1.2,1)" filter="url(#sb)"><path d="M871 394Q870 412 866 426Q864 446 869 464Q872 472 877 477"/><path d="M872 394Q888 406 897 418Q906 429 906.5 441Q904 450 897 457L889 468"/><path d="M902.5 418Q912 405 917 399.5Q925 392 932 387.4Q945 380 957.4 376.7"/><path d="M924 435.6Q940 428 948 423.6Q955 418 958.7 412.9"/><path d="M973.5 422.2L1000 406.2"/><path d="M820.8 471.8Q828 463 834.2 459.7Q842 456 850.3 455.7L865 457"/><path d="M877.8 482.2Q874 492 871 497Q866 504 860.3 507.8Q853 511 846.8 513.2L829.2 518.6"/><path d="M890 490.3Q894 502 898.1 510.5Q905 520 914.3 526.8Q924 532 932 534.9L941.4 540.3"/><path d="M881.9 507.8Q882 520 884.6 530.8Q889 542 895.4 553.8L908.9 576.8"/><path d="M898.1 514.6Q901 525 904.9 534.9Q910 544 917 551L925.1 556.5"/><path d="M945.4 486.2Q956 490 965.7 497Q973 503 979.2 510.5L995.4 528.1"/><path d="M873.8 470L877.8 482.2"/><path d="M1069.2 414.6Q1072 430 1071.7 444.3Q1070 462 1064.3 474Q1056 483 1047 486.4L1027.1 491.3"/><path d="M1128.7 427L1131.2 451.7"/><path d="M881 481Q900 468 920.7 457.7Q948 445 976 434Q1005 424 1035 418"/><path d="M940 440Q960 420 976 414Q992 404 1007.5 398.5Q1020 395 1035 394.6"/><path d="M984 460L988 478M990 457L995 480M997 456L1001 481M1004 458L1008 482M1011 462L1012 484"/><path d="M885 489Q896 505 905 520.7Q916 537 928.6 552L944 572"/><path d="M893 485Q915 496 936.5 505Q956 513 976 520.7L1003.5 532.6"/><path d="M956 485Q971 494 983.8 505Q995 516 1003.5 528.6"/><path d="M1117.8 390.7L1133.6 402.5M1125.7 430L1129.6 453.7"/><path d="M1005 397L1030 384M1008 406L1040 398M1022 445L1030 425"/><path d="M817 440L826 432M834 423L841 410M838 548L846 540M856 560L860 575"/><path d="M960 440Q975 450 985 470M1000 455L1008 480"/></g><g fill="none" stroke="#88888e" stroke-width="1.9" stroke-linecap="round" opacity="0.75" filter="url(#sb)"><path d="M871 394Q870 412 866 426Q864 446 869 464Q872 472 877 477"/><path d="M872 394Q888 406 897 418Q906 429 906.5 441Q904 450 897 457L889 468"/><path d="M902.5 418Q912 405 917 399.5Q925 392 932 387.4Q945 380 957.4 376.7"/><path d="M924 435.6Q940 428 948 423.6Q955 418 958.7 412.9"/><path d="M973.5 422.2L1000 406.2"/><path d="M820.8 471.8Q828 463 834.2 459.7Q842 456 850.3 455.7L865 457"/><path d="M877.8 482.2Q874 492 871 497Q866 504 860.3 507.8Q853 511 846.8 513.2L829.2 518.6"/><path d="M890 490.3Q894 502 898.1 510.5Q905 520 914.3 526.8Q924 532 932 534.9L941.4 540.3"/><path d="M881.9 507.8Q882 520 884.6 530.8Q889 542 895.4 553.8L908.9 576.8"/><path d="M898.1 514.6Q901 525 904.9 534.9Q910 544 917 551L925.1 556.5"/><path d="M945.4 486.2Q956 490 965.7 497Q973 503 979.2 510.5L995.4 528.1"/><path d="M873.8 470L877.8 482.2"/><path d="M1069.2 414.6Q1072 430 1071.7 444.3Q1070 462 1064.3 474Q1056 483 1047 486.4L1027.1 491.3"/><path d="M1128.7 427L1131.2 451.7"/><path d="M881 481Q900 468 920.7 457.7Q948 445 976 434Q1005 424 1035 418"/><path d="M940 440Q960 420 976 414Q992 404 1007.5 398.5Q1020 395 1035 394.6"/><path d="M984 460L988 478M990 457L995 480M997 456L1001 481M1004 458L1008 482M1011 462L1012 484"/><path d="M885 489Q896 505 905 520.7Q916 537 928.6 552L944 572"/><path d="M893 485Q915 496 936.5 505Q956 513 976 520.7L1003.5 532.6"/><path d="M956 485Q971 494 983.8 505Q995 516 1003.5 528.6"/><path d="M1117.8 390.7L1133.6 402.5M1125.7 430L1129.6 453.7"/><path d="M1005 397L1030 384M1008 406L1040 398M1022 445L1030 425"/><path d="M817 440L826 432M834 423L841 410M838 548L846 540M856 560L860 575"/><path d="M960 440Q975 450 985 470M1000 455L1008 480"/></g><path d="M937.5 525.9Q935.1 528.2 930.9 527.1M1038.0 507.5Q1041.4 507.8 1045.0 510.1M914.8 492.6Q914.7 495.0 916.4 493.9M980.8 410.6Q984.3 410.5 986.9 413.5M831.1 421.7Q826.6 425.1 823.8 424.7M913.5 513.2Q912.7 515.4 910.3 513.8M1021.7 438.2Q1022.1 437.5 1025.3 440.2M851.7 498.4Q850.5 498.5 850.6 500.1M997.4 474.2Q998.3 474.4 997.6 478.1M1048.6 383.5Q1043.8 386.2 1042.9 386.6M867.4 493.5Q867.2 495.5 869.5 493.8M828.4 528.6Q824.0 528.7 820.9 530.0M909.4 532.6Q909.7 534.9 907.6 534.5M800.5 566.3Q801.6 569.1 801.8 568.5M860.9 562.0Q861.7 562.9 863.9 566.4M957.3 576.4Q960.7 576.7 960.2 576.8M877.5 426.0Q875.0 427.1 872.8 428.9M803.1 560.4Q804.5 560.0 803.1 562.6M970.2 567.1Q966.4 568.6 965.7 570.6M818.9 546.3Q821.2 549.5 819.5 550.0M1048.9 468.8Q1047.2 469.8 1045.7 472.5M877.0 408.0Q876.7 408.6 872.7 408.2M902.4 446.0Q904.4 448.4 904.1 447.9M866.2 534.6Q865.0 538.4 862.4 540.1M866.7 518.5Q867.9 521.1 866.9 522.2M849.9 566.2Q847.2 569.3 848.4 571.9M840.0 512.0Q838.6 514.5 836.0 514.6M862.9 506.5Q859.5 509.5 857.4 509.8M1013.9 515.3Q1010.1 515.9 1006.1 516.4M822.2 544.7Q823.3 549.3 822.8 552.3M969.8 413.0Q969.6 415.9 968.1 419.5M937.8 532.4Q934.0 533.3 934.0 536.9M886.7 507.7Q886.3 507.3 884.9 510.5M894.9 423.8Q895.2 423.0 897.0 424.7M827.7 386.1Q829.0 388.6 829.5 390.5M837.2 557.8Q836.6 558.4 837.8 559.7M812.6 543.6Q815.2 542.2 816.9 544.1M915.2 446.2Q913.7 446.2 909.7 446.9M995.6 506.2Q997.9 507.3 999.5 508.0M1042.6 570.7Q1045.5 571.2 1045.2 575.7M811.4 491.0Q814.5 493.8 816.5 493.5M869.9 464.5Q872.8 465.3 871.9 467.1M1043.9 559.9Q1047.8 561.9 1047.8 564.0M880.0 442.2Q879.3 446.1 880.2 450.1M813.9 502.1Q816.4 505.3 816.7 505.8M845.3 564.2Q846.7 565.1 850.1 568.8M1053.2 437.1Q1054.0 440.3 1053.7 442.7M973.9 402.4Q975.9 404.4 977.7 407.7M850.6 483.9Q852.6 486.4 852.6 488.3M890.6 560.5Q888.1 565.2 889.5 567.7M883.2 493.0Q881.9 497.5 880.7 498.7M872.3 456.6Q874.4 460.0 878.1 460.7M804.6 544.6Q804.4 548.7 805.9 550.6M1027.2 407.3Q1026.8 409.0 1026.5 412.1M819.8 495.0Q822.0 497.0 826.5 496.5M988.9 510.4Q990.1 513.2 987.5 512.0M960.9 388.7Q964.2 392.7 966.4 393.2M964.3 405.7Q961.1 406.6 960.7 406.6M879.6 410.9Q880.9 410.8 885.3 411.7M923.7 526.0Q926.7 526.7 930.3 529.0M930.9 475.9Q930.6 480.2 933.8 483.0M819.3 504.0Q817.1 505.2 814.4 505.4M842.9 488.2Q841.7 488.0 840.4 490.7M836.4 452.5Q840.0 454.8 841.9 455.9M807.6 511.3Q809.1 510.7 809.9 512.2M1016.2 474.1Q1012.7 476.2 1013.0 476.5M1040.9 513.9Q1044.4 515.1 1044.0 515.1M998.1 406.7Q998.3 408.6 1000.6 411.8M934.8 448.0Q938.1 449.5 938.8 449.8M993.0 464.8Q993.1 468.7 992.6 471.9M972.8 457.3Q972.9 455.6 975.4 457.6M1020.2 474.2Q1023.4 475.8 1026.8 474.2M936.5 463.9Q937.4 463.2 941.1 465.3M869.6 455.4Q871.8 456.1 876.0 458.7M821.3 435.8Q819.5 439.2 821.5 439.2M868.1 564.7Q866.4 569.1 864.9 569.9M813.1 511.4Q813.1 511.6 811.2 514.6M829.3 383.9Q830.5 386.2 832.6 384.8M867.0 440.7Q869.4 443.5 870.0 444.5M821.7 426.6Q819.3 426.9 815.7 427.7M1048.7 380.2Q1047.5 379.2 1046.9 381.8M916.1 574.9Q915.6 575.5 918.4 579.5M1023.3 476.2Q1026.1 475.1 1030.8 477.5M875.3 390.9Q875.0 390.8 876.3 394.3M800.7 571.4Q800.2 573.0 800.6 574.5M807.4 441.1Q809.0 442.9 807.1 443.8M1009.7 421.5Q1009.5 422.8 1009.4 423.5M870.1 502.8Q866.2 503.4 863.9 504.5M999.9 423.3Q999.0 425.6 1001.4 425.6M997.7 440.9Q998.0 439.6 1000.4 441.7M883.4 493.2Q885.9 491.8 886.8 493.9M829.1 435.6Q830.8 435.5 833.1 436.9M976.6 489.1Q975.9 492.7 973.2 495.6M887.0 540.7Q885.0 542.0 881.1 541.6M843.9 539.8Q844.1 539.3 847.8 541.5M842.7 512.8Q845.6 513.4 846.4 513.6M815.3 449.7Q812.3 449.2 808.3 450.9M883.5 450.8Q885.8 452.1 887.5 450.9M968.7 397.9Q971.8 399.0 973.2 400.5M1036.4 536.4Q1038.8 537.3 1037.9 538.6M884.9 466.4Q881.8 468.9 878.4 467.7M929.7 399.5Q928.8 404.8 931.4 406.2M897.7 553.6Q898.5 553.8 901.1 556.3M920.0 449.7Q921.8 450.9 924.8 454.2M1051.1 545.4Q1049.4 547.2 1048.5 552.0M1001.6 476.0Q1001.0 477.5 1003.5 477.2M1023.8 418.5Q1026.3 422.8 1027.3 424.2M937.6 537.5Q939.7 537.9 941.8 537.6M825.9 456.0Q827.1 455.7 829.8 456.4M896.1 518.3Q895.1 520.1 891.7 518.5M958.3 511.7Q955.7 513.6 954.1 514.8M954.3 482.4Q954.5 482.3 957.9 483.3M925.2 529.4Q928.7 531.1 928.8 534.6M965.4 393.3Q965.6 397.7 962.1 398.9M956.8 545.0Q954.5 548.1 954.6 551.0M1022.5 426.3Q1021.5 428.2 1021.4 434.1M873.5 414.3Q872.3 415.6 867.9 416.1M872.6 400.6Q872.9 403.1 871.6 406.6M1019.4 421.1Q1021.2 424.1 1022.0 424.0M822.5 504.3Q823.2 506.7 827.5 508.6M1001.2 553.0Q1001.7 556.2 1002.8 559.1M1025.3 438.9Q1026.5 439.4 1024.1 442.3M920.1 498.5Q921.7 499.9 922.7 500.2M957.6 523.3Q959.0 526.3 957.7 525.7M855.7 547.4Q851.8 548.8 850.0 548.7M1004.5 473.4Q1004.2 472.5 1006.6 474.9M819.4 500.9Q819.4 503.1 817.5 502.7M992.7 520.2Q989.5 522.6 985.2 521.2M810.6 399.4Q811.0 399.9 812.5 400.8M954.6 526.1Q955.2 526.8 955.4 528.5M813.1 497.2Q811.9 500.9 810.8 500.8M1038.6 393.3Q1035.7 394.3 1034.4 398.3M896.9 449.1Q893.3 449.1 890.7 450.7M902.3 517.0Q900.6 519.6 900.7 523.5M1006.8 481.8Q1006.1 483.6 1007.4 484.0M805.7 432.7Q807.7 434.1 805.9 435.2M872.5 563.9Q874.3 563.1 873.6 566.2M980.8 450.5Q981.4 450.8 982.3 452.0M907.2 389.5Q905.3 389.5 903.9 389.8M807.6 434.3Q805.5 435.7 803.3 440.7M874.1 533.1Q875.1 535.9 872.8 537.5M941.3 386.1Q940.2 388.3 939.7 387.6M999.7 560.2Q998.6 561.8 995.4 560.3M818.7 533.6Q818.5 532.7 814.2 534.0M881.5 432.6Q883.7 433.0 884.5 436.4M822.8 469.6Q824.9 472.3 823.7 471.9M828.4 382.7Q825.3 381.6 821.4 383.5M836.9 561.2Q839.4 561.3 844.5 561.9M843.6 528.3Q840.6 529.7 840.4 531.0M1048.6 518.0Q1050.3 517.9 1051.0 518.9M868.1 473.6Q864.3 474.1 862.6 474.2M842.8 487.0Q845.7 489.1 848.7 489.6M880.9 478.8Q876.9 480.5 876.4 482.3M862.4 383.2Q863.3 386.8 863.0 387.0M868.5 484.0Q867.2 486.5 862.3 485.2M851.8 412.0Q855.3 413.9 859.1 413.8M910.6 456.0Q913.0 460.3 915.0 462.1M816.8 448.5Q815.1 450.7 815.8 453.4M861.5 407.5Q863.2 411.5 866.8 413.2M973.1 430.9Q971.4 434.6 970.5 437.3M838.9 431.2Q841.2 433.4 840.3 438.3M816.7 389.3Q814.1 390.6 815.4 395.6M999.2 476.9Q1003.1 475.8 1006.3 477.8M967.0 500.0Q970.9 500.3 971.3 503.7M804.3 514.4Q805.4 515.3 806.8 515.0M1021.1 521.7Q1022.0 521.3 1020.1 523.9M977.3 430.2Q980.2 430.3 981.1 430.2M1024.4 471.2Q1024.6 473.9 1026.6 473.0M830.2 396.5Q831.9 397.5 834.2 397.5M945.7 413.6Q946.5 414.8 945.8 416.4M923.1 559.6Q924.1 560.8 925.0 561.7M1023.8 488.9Q1025.7 493.2 1025.3 494.7M849.9 400.3Q852.2 401.0 851.4 403.6M939.4 505.8Q944.1 506.6 946.6 508.6M810.5 504.1Q807.8 509.4 808.7 511.0M872.0 505.0Q873.8 506.6 876.3 509.6M809.3 391.8Q811.7 393.0 811.1 397.8M851.7 414.7Q850.2 417.0 845.6 419.4M810.7 461.4Q812.7 460.7 814.1 461.7M811.4 480.3Q807.5 479.3 803.9 481.6M981.7 401.7Q986.2 402.6 986.7 403.1M885.8 432.9Q882.8 432.0 880.5 433.3M906.6 560.8Q907.4 562.1 904.9 564.7M995.0 483.7Q998.1 483.8 997.8 484.2M887.3 560.7Q886.4 564.4 887.3 566.1M841.3 472.2Q838.8 474.1 839.2 478.4M959.0 523.3Q956.2 522.0 956.4 523.4M808.3 467.4Q804.4 469.4 803.2 469.9M810.9 493.9Q809.9 496.4 812.5 497.1M813.9 530.3Q813.9 532.2 812.8 534.2M1015.1 561.1Q1017.6 561.2 1017.0 564.3M881.2 461.1Q885.4 463.7 888.4 464.2M969.2 379.2Q972.7 383.0 973.4 385.6M881.4 544.9Q883.8 547.5 884.3 550.2M964.1 500.6Q967.0 500.3 970.0 503.9M988.6 531.8Q992.3 532.1 995.6 532.7M813.4 419.1Q808.9 422.2 806.4 422.6M945.8 455.2Q947.1 455.2 950.2 459.1M947.5 494.1Q947.2 496.6 947.4 500.6M971.3 452.8Q969.1 455.5 967.3 456.7M1004.5 408.2Q1006.7 406.7 1006.8 408.3M891.2 465.8Q891.6 467.3 891.7 472.6M990.0 530.9Q988.0 533.2 985.1 533.8M1007.8 501.2Q1008.8 500.4 1005.8 502.0M804.6 446.3Q803.5 446.4 805.6 448.7M851.4 523.3Q855.0 526.0 855.1 525.5M957.3 422.0Q957.2 422.3 957.9 426.3M890.6 531.0Q888.5 533.4 885.0 533.6M1014.2 560.6Q1015.7 564.5 1015.9 567.1M1018.1 520.3Q1019.3 520.6 1021.9 522.9M955.1 531.3Q956.3 532.4 954.7 534.5M809.1 498.9Q810.2 497.8 812.9 500.7M818.9 463.2Q820.4 465.1 821.5 463.3M1002.4 443.6Q1004.6 442.5 1009.7 445.5M803.5 498.2Q804.9 501.2 803.9 504.7M1029.9 499.4Q1031.8 500.5 1034.4 502.1M998.8 424.5Q995.5 425.6 995.6 426.5M833.2 510.7Q836.8 511.1 838.6 512.3M856.3 548.6Q858.9 549.8 860.0 554.1M907.8 395.3Q905.5 394.3 902.2 396.9M906.2 472.0Q907.4 472.8 910.4 474.1M805.4 512.5Q804.8 513.1 807.5 515.3M1034.0 436.8Q1036.3 436.3 1035.2 439.1M861.6 420.4Q860.3 424.9 862.3 426.4M858.1 514.8Q854.1 514.7 853.7 516.7M848.0 431.3Q847.4 434.8 847.9 438.3M1006.1 491.8Q1005.5 493.5 1003.9 496.0M882.8 405.1Q879.9 405.4 878.5 406.8M931.8 495.9Q933.0 495.6 932.3 498.9M811.5 528.6Q813.5 529.9 818.8 530.1M847.7 509.0Q846.5 509.4 848.0 511.2M958.6 480.0Q955.9 483.1 952.3 483.4M824.5 473.0Q822.1 476.3 823.0 476.6M868.5 534.2Q864.3 536.3 861.0 535.6M1056.0 404.8Q1053.7 406.3 1051.7 409.7M823.6 460.5Q823.8 464.6 825.9 467.7M885.7 500.5Q885.3 503.6 888.7 504.2M948.2 427.3Q947.6 431.3 946.9 432.1M984.8 439.7Q982.8 443.3 983.4 443.5M845.2 483.2Q848.0 485.0 846.9 484.6M833.5 469.3Q833.3 471.6 835.6 470.1M854.1 428.0Q857.3 429.4 856.4 428.9M1030.4 544.5Q1031.4 546.0 1035.1 549.3M966.6 476.2Q968.6 478.5 967.8 477.9M969.5 523.8Q968.4 527.8 968.2 531.2M847.3 386.2Q846.0 386.3 847.7 389.7M839.3 451.9Q840.8 456.7 839.6 459.6M928.6 442.8Q930.4 446.0 931.0 446.5M988.6 437.5Q990.4 436.4 991.5 437.5M835.1 419.6Q833.5 423.5 833.6 425.4M830.4 561.4Q830.9 563.6 829.7 564.0M899.1 551.6Q895.8 552.7 895.8 556.3M893.3 487.0Q891.8 487.8 891.5 488.8M908.7 545.1Q908.7 547.6 908.0 548.8M854.2 434.3Q854.1 435.1 852.7 438.8M888.0 489.9Q891.3 488.5 891.1 490.9M902.2 437.3Q901.6 437.8 903.7 439.0M1026.9 394.7Q1026.3 394.5 1024.6 398.1M835.2 434.7Q834.9 438.2 836.5 441.9M898.5 408.6Q896.5 411.0 894.7 413.2M982.3 568.4Q985.1 569.4 987.9 569.1M858.7 514.5Q858.4 517.1 857.2 518.4M1032.1 519.1Q1029.1 522.1 1028.4 524.2M936.8 391.1Q939.2 393.3 941.7 395.3M967.3 530.5Q964.7 531.2 962.6 531.4M1054.1 443.1Q1049.4 444.6 1047.9 444.0M946.1 485.9Q941.6 487.2 940.0 488.7M935.3 517.4Q933.5 517.9 929.0 521.9M882.8 559.9Q879.4 563.6 877.3 565.2M911.4 511.2Q909.6 514.2 906.1 513.6M900.8 476.7Q898.4 481.5 899.7 482.5M855.8 477.9Q858.5 477.7 857.7 479.2M851.0 539.8Q850.4 542.8 849.3 542.7M896.3 444.1Q895.0 444.2 897.7 447.3M818.8 441.3Q815.0 440.9 812.3 442.5M849.8 503.5Q852.1 503.5 854.3 505.3M817.9 534.5Q819.3 535.9 818.4 537.1M1015.1 441.8Q1020.5 442.0 1022.7 442.9M1053.2 520.8Q1048.6 521.9 1047.9 524.4M893.3 559.0Q898.5 560.9 899.9 562.4M852.5 395.4Q852.1 396.9 852.2 399.9M1039.5 473.1Q1037.0 474.0 1036.5 475.6M810.7 426.1Q809.3 430.5 807.8 433.5M952.1 482.2Q952.1 481.6 955.9 484.1M877.4 381.0Q877.8 382.9 880.3 386.3M900.6 420.5Q899.1 422.4 901.0 427.6M1020.6 493.5Q1017.6 496.5 1018.2 496.4M1035.7 510.5Q1037.4 512.0 1036.3 512.8M831.0 425.4Q829.6 426.4 830.8 427.8M1022.3 557.4Q1018.9 560.7 1018.4 560.5M1012.5 474.6Q1016.6 476.8 1016.8 480.5M1031.7 544.8Q1027.5 546.7 1026.7 550.5M947.2 558.9Q949.6 558.7 953.2 559.7M823.2 423.6Q823.3 425.6 825.2 428.2M1039.3 497.2Q1034.2 499.4 1032.9 498.5M809.2 417.9Q807.4 420.0 804.6 422.4M967.3 463.7Q967.0 462.9 969.7 465.8M1040.9 567.1Q1040.6 570.2 1042.0 571.1M900.5 412.7Q895.1 413.4 893.4 414.4M833.5 505.5Q834.0 507.6 836.0 508.9M903.5 475.6Q905.5 478.4 904.0 481.6M988.9 563.2Q989.3 566.8 987.3 568.8M827.7 461.5Q829.9 460.9 830.7 461.7M841.0 384.2Q839.8 384.8 839.9 386.0M953.2 558.7Q957.6 559.4 958.0 562.6M925.3 506.5Q924.0 508.0 921.8 507.8M816.9 543.8Q817.2 544.8 815.6 547.3M843.3 444.4Q841.3 448.1 839.6 451.3M947.2 430.9Q948.7 431.7 949.5 431.7M1049.6 501.9Q1046.0 501.8 1042.5 502.2M894.8 452.6Q892.5 457.6 893.2 459.0M909.9 527.2Q909.5 528.2 908.5 532.3M815.5 523.7Q818.6 525.5 819.2 525.3M980.2 455.6Q978.0 457.3 978.2 457.6M959.5 433.1Q960.3 434.4 958.9 435.1M1051.7 424.2Q1052.7 426.6 1053.0 430.5M835.6 487.6Q833.3 488.4 830.2 489.2M945.8 503.3Q948.0 504.5 948.8 506.6M865.6 514.9Q867.0 517.2 865.8 520.9M863.7 527.7Q865.9 528.8 865.1 533.6M912.7 548.9Q916.9 551.1 918.7 553.1M1035.3 444.0Q1036.0 446.0 1032.7 449.4M873.4 403.7Q877.7 402.9 879.3 405.0M827.1 567.1Q824.7 567.8 823.6 570.6M868.0 573.6Q868.0 574.8 865.0 574.5M843.4 523.6Q841.2 527.6 841.3 530.8M1042.4 496.0Q1044.1 495.0 1044.7 497.7M841.5 476.7Q842.0 477.2 841.1 479.1M925.6 483.4Q925.3 486.9 924.0 489.9M998.8 398.1Q998.9 396.7 996.4 399.2M1021.8 499.6Q1019.2 500.9 1017.6 505.3M980.4 519.6Q981.5 523.1 983.6 523.2M892.6 420.6Q887.4 419.6 884.7 421.1M969.6 455.6Q967.4 458.0 967.0 459.7M829.9 422.8Q832.1 424.0 831.1 428.0M1029.0 430.8Q1030.2 433.4 1032.9 432.2M866.4 544.5Q862.9 547.4 861.9 550.9M822.4 428.4Q824.9 429.5 825.9 430.4M849.2 429.4Q850.3 428.2 851.9 430.4M908.8 429.6Q912.5 433.8 913.3 434.5M1033.5 424.1Q1035.3 427.7 1034.1 431.6M914.0 430.2Q916.8 434.1 916.6 436.2M883.5 385.2Q883.5 387.2 884.4 388.7M1021.3 567.7Q1020.0 572.3 1017.9 572.8M988.4 470.1Q986.2 471.0 983.5 471.1M853.1 510.5Q852.7 512.9 848.3 511.4M1040.5 387.6Q1042.4 388.9 1041.7 389.8M841.4 398.9Q841.6 400.6 844.6 400.3M827.7 412.0Q831.6 413.8 832.9 414.3M1016.5 522.7Q1018.3 524.6 1020.7 527.5M874.0 559.6Q872.6 559.3 870.2 562.4M831.3 493.4Q832.8 495.2 836.3 497.9M891.5 462.2Q889.3 465.1 889.0 469.3M904.7 410.8Q907.5 412.7 909.0 411.7M1023.3 497.2Q1023.1 498.1 1022.5 501.5M913.8 477.4Q915.4 479.6 914.4 480.6M858.3 426.2Q857.0 429.0 857.3 431.9M877.7 503.2Q879.3 506.8 880.6 509.9M950.7 427.2Q947.5 428.4 947.3 428.1M842.2 476.2Q842.6 479.7 845.6 479.5M972.4 452.5Q973.1 452.4 970.0 454.6M962.6 457.5Q963.0 462.0 960.2 465.1M815.6 466.5Q816.7 469.9 821.2 469.4M1031.5 507.9Q1032.8 509.9 1030.1 509.8M965.2 466.1Q962.4 465.1 959.6 467.4M818.2 567.6Q813.7 566.6 812.0 568.8M955.4 463.8Q958.3 466.5 959.0 467.0M968.4 464.1Q969.1 465.7 970.0 468.8M894.1 569.5Q897.9 572.2 900.4 572.3M862.1 555.0Q866.4 555.4 869.6 556.7M893.5 487.6Q893.6 489.8 890.6 494.1M990.6 456.6Q989.6 456.4 988.0 458.4M1021.6 476.3Q1017.9 476.7 1015.6 476.6M915.5 435.5Q913.7 434.8 910.3 436.1M955.5 500.9Q953.9 503.8 953.4 504.5M872.9 542.2Q873.8 541.7 876.1 544.1M1015.5 576.1Q1018.7 579.1 1018.8 579.2M838.6 439.5Q839.7 440.1 843.2 441.5M813.4 407.6Q816.7 411.7 816.7 412.2M951.5 433.4Q954.6 436.0 954.7 439.2M958.1 527.7Q955.2 528.5 953.6 532.0M868.0 568.8Q867.9 569.4 869.4 570.5M1014.2 413.0Q1014.8 414.0 1016.8 413.2M889.8 506.9Q890.5 507.4 892.0 511.5M1040.9 524.1Q1043.1 524.9 1043.0 525.6M975.5 527.8Q973.1 527.1 973.0 529.4M975.0 540.4Q976.6 541.4 976.4 544.0M887.7 575.5Q887.9 577.7 885.0 575.9M838.8 418.3Q842.5 419.7 842.8 420.6M1004.9 476.3Q1000.9 475.5 999.9 477.0M1009.6 495.6Q1007.3 496.1 1002.9 495.8M976.3 484.4Q978.9 485.9 978.0 487.2M1054.8 503.0Q1055.7 505.9 1055.5 507.9M899.4 557.9Q897.5 561.1 893.7 562.5M828.5 476.1Q831.8 476.1 831.4 478.3M996.3 544.1Q997.2 544.9 1000.7 544.5M963.4 449.3Q966.4 451.8 968.3 452.0M986.1 490.5Q987.8 490.1 991.5 490.5M1042.7 514.3Q1042.6 517.1 1039.7 518.8M883.0 456.7Q877.7 458.5 875.3 457.8M943.3 447.0Q946.3 449.6 947.4 451.7M926.5 390.2Q923.9 389.9 919.2 391.2M967.4 402.1Q968.5 403.5 969.9 406.7M805.3 465.2Q806.1 464.5 808.2 466.9M798.8 571.8Q797.4 570.7 796.6 572.6M883.5 479.4Q881.4 479.8 883.2 481.7M963.9 546.2Q966.1 546.9 964.8 549.2M813.2 427.9Q815.5 432.8 816.5 434.2M937.1 418.1Q938.3 420.7 939.7 422.3M1048.9 515.4Q1046.9 515.6 1044.8 518.2M951.5 432.6Q952.0 432.2 952.7 435.6M866.1 569.3Q866.9 572.4 868.1 573.9M903.4 459.2Q905.9 461.0 906.9 463.4M962.2 447.9Q964.5 449.6 966.9 451.3M891.8 530.5Q890.0 534.0 885.8 533.7M828.2 408.9Q825.8 409.0 825.9 410.6M816.9 558.9Q818.5 560.9 819.3 561.1M910.9 488.7Q910.1 491.7 906.8 491.8M858.7 387.3Q861.7 387.4 863.5 387.7M974.9 544.0Q972.4 547.5 971.2 549.2M942.4 422.4Q942.8 424.8 943.0 429.6M1001.4 472.8Q998.7 474.7 995.8 475.9M892.6 426.1Q887.5 425.0 886.1 427.7M894.4 394.8Q894.5 398.0 896.6 398.9M925.5 561.5Q926.6 564.1 926.7 564.4M883.2 415.8Q884.6 418.5 882.3 420.0M1005.7 544.1Q1007.0 547.3 1005.6 548.7M875.9 416.4Q876.9 417.9 879.8 421.4M956.5 507.0Q955.4 512.2 954.4 514.3M816.9 495.6Q817.5 497.5 820.9 502.5M799.4 524.0Q798.9 523.3 795.6 526.4M852.9 431.2Q853.7 430.8 856.5 431.6M889.7 484.2Q892.0 487.1 897.2 486.8M848.5 485.7Q848.4 486.6 844.9 486.9M809.0 452.6Q807.5 455.2 807.7 458.7M803.9 458.9Q805.0 460.8 806.3 465.4M964.4 461.5Q961.9 461.3 961.1 464.4M943.2 525.2Q945.2 526.2 944.2 527.2M877.9 404.8Q879.0 407.2 876.8 408.4M1046.4 459.7Q1046.5 459.0 1047.6 461.8M807.0 559.4Q808.7 562.8 813.7 562.4M822.3 438.7Q821.8 439.6 825.0 440.8M983.9 393.1Q987.3 395.7 988.4 395.1M1015.5 484.7Q1012.9 486.9 1013.7 486.9M851.3 555.7Q850.0 556.0 848.7 558.4M900.2 464.2Q900.1 466.5 899.8 467.2M860.9 500.7Q859.7 503.4 860.6 503.9M827.2 436.6Q828.1 436.5 828.6 438.6M813.7 555.9Q814.8 558.5 816.7 558.3M974.8 557.7Q976.1 558.2 977.4 562.3M955.2 545.1Q952.6 548.2 948.8 548.9M849.3 490.3Q847.9 489.3 846.4 490.9M1051.7 501.8Q1050.7 503.1 1048.8 503.3M1016.5 441.5Q1014.9 444.1 1015.7 445.1M896.3 418.7Q897.8 421.0 898.7 420.0M990.6 547.0Q987.7 548.0 986.2 550.1M1024.9 430.2Q1022.5 433.3 1023.7 435.8M990.6 555.0Q986.6 557.3 986.3 556.4M954.7 539.5Q955.4 540.6 953.4 544.0M825.7 528.1Q828.6 530.5 831.1 532.9M853.9 545.9Q852.2 545.7 851.1 548.3M1044.2 408.2Q1044.9 406.4 1046.8 408.5M820.1 565.3Q817.8 564.8 817.9 568.1M1041.4 469.4Q1043.7 469.0 1044.9 470.0M825.0 465.5Q826.8 467.0 828.0 471.0M919.1 387.3Q915.7 388.1 911.8 389.0M875.3 527.3Q873.4 529.0 871.9 531.6M967.6 414.8Q967.9 417.7 970.5 417.6M854.2 524.9Q853.0 526.1 852.0 525.4M811.1 498.5Q811.6 500.7 815.3 503.9M981.9 529.9Q984.2 530.0 983.1 531.9M807.7 550.9Q809.1 555.3 808.9 557.7" fill="none" stroke="#8e8e93" stroke-width="1" opacity="0.45"/></g><path d="M621 683 L669 683 Q675 683 674.6 690 L669 745 L622 745 Q617 745 617 739z" fill="#d4d4d6"/><path d="M620 700.6H673M619 723H671M652 683L645 745" stroke="#8a8a8e" stroke-width="0.9" fill="none"/><g stroke="#c4c4c8" fill="none" stroke-linecap="round"><path d="M751 714.4H1147M751 718.5H1147M751 727.4H1161M751 731.6H1278" stroke-width="2.8"/><path d="M751 722.6H1147" stroke-width="2.8" stroke="#aaaaae"/><path d="M670 727.5H752" stroke-width="4" stroke-linecap="butt"/><path d="M1252 738V724H1282L1281.5 708.5H1296.5L1299.5 738" stroke-width="2.2" stroke-linecap="butt"/><path d="M670 738.3H1325V718" stroke-width="3" stroke-linecap="butt"/><path d="M726 725L759 709.5L758.5 738" stroke-width="1.8"/></g><path d="M1323 717.5L1326 717.5L1327 738" stroke="#c8c8cc" stroke-width="3.5"/><path d="M834 746.8H1272" stroke="#dcdcde" stroke-width="1.3"/><path d="M616 746.5H694" stroke="#c81414" stroke-width="2.6"/><polygon points="693,742.5 703,746.5 693,750" fill="#c81414"/><path d="M616.5 746L622.5 689" stroke="#18b02a" stroke-width="2.2"/><polygon points="619.5,691 623.6,679.6 627,692" fill="#18b02a"/><path d="M616 746L608 697" stroke="#1a1aa0" stroke-width="2.2"/><polygon points="604,699 607,688 611.5,698" fill="#1a1aa0"/><rect x="859" y="749" width="350" height="16" fill="#d8d8da"/><g fill="#2a2a2e"><rect x="865.5" y="752" width="3.5" height="10"/><rect x="871" y="752" width="3.5" height="4"/><rect x="871" y="758" width="3.5" height="4"/><rect x="884.5" y="752" width="15" height="10"/></g><path d="M889 759H896V755" stroke="#d8d8da" stroke-width="1.6" fill="none"/><text x="907.5" y="760.8" font-family="Liberation Sans" font-size="10" fill="#3c3c40" textLength="168" lengthAdjust="spacing">PLA/PETG/ABS/TPU/PC</text><polygon points="1131,762 1136.5,752.5 1142,762" fill="none" stroke="#5a5a5e" stroke-width="0.9"/><text x="1145" y="756.5" font-family="Liberation Mono" font-size="6" fill="#3a3a3e" textLength="22" lengthAdjust="spacingAndGlyphs">HOT</text><text x="1145" y="762.5" font-family="Liberation Mono" font-size="6" fill="#3a3a3e" textLength="53" lengthAdjust="spacingAndGlyphs">SURFACE</text><g fill="#d8d8da"><path d="M1225 755L1230 751L1235 755H1233V760H1227V755z"/><rect x="1227" y="761" width="6" height="1.4"/><path d="M1261 755L1266 751L1271 755H1269V760H1263V755z"/><rect x="1263" y="761" width="6" height="1.4"/></g><rect x="1240.5" y="752" width="15" height="11" fill="none" stroke="#d8d8da" stroke-width="1.8"/><path d="M1280 749H1301L1320 763H1280z" fill="#55545b"/><path d="M1313.5 749H1354V763H1331.5z" fill="#55545b"/><text x="1382.5" y="735" font-family="Liberation Sans" font-weight="bold" font-size="24" fill="#0fb03c" stroke="#0fb03c" stroke-width="1.6" textLength="32.5" lengthAdjust="spacingAndGlyphs">01</text><g stroke="#1d9e4a" fill="none" stroke-linecap="round"><path d="M695 236.8H716" stroke-width="1.6"/><path d="M699 232.5L713 225" stroke-width="4.8"/><path d="M701 231.5L708 227.5" stroke="#2a7a45" stroke-width="1"/></g><path d="M1321 261H1355.5Q1357.5 261 1357.8 263L1360 284Q1360 286 1358 286H1323.5Q1321.5 286 1321.2 284L1319 263Q1319 261 1321 261z" fill="none" stroke="#99989e" stroke-width="1.3"/><path d="M1329 265.5L1349.5 282M1349 265.5L1329.5 282" stroke="#a8a7ad" stroke-width="2"/><path d="M1325 294.5H1360.5Q1362.5 294.5 1362.8 296.5L1365 318.5Q1365 320.5 1363 320.5H1327.5Q1325.5 320.5 1325.2 318.5L1323 296.5Q1323 294.5 1325 294.5z" fill="none" stroke="#99989e" stroke-width="1.3"/><g stroke="#9a999f" stroke-width="1.3" fill="none"><path d="M1344 300.5L1358 303.5L1355.5 312L1341.5 309z"/><path d="M1331.5 315.5H1359"/><path d="M1331 311L1338 306.5M1331 306.5V311H1335"/><path d="M1330 300H1340" stroke-width="0.8"/></g><path d="M1329.5 330H1365.5Q1367.5 330 1367.8 332L1370 354.5Q1370 356.5 1368 356.5H1332.0Q1330.0 356.5 1329.7 354.5L1327.5 332Q1327.5 330 1329.5 330z" fill="none" stroke="#99989e" stroke-width="1.3"/><g stroke="#9a999f" stroke-width="1.3" fill="none"><rect x="1334.5" y="334" width="30" height="6" rx="1"/><rect x="1335" y="342.5" width="8" height="10.5" rx="1"/><rect x="1346" y="342.5" width="19" height="4" rx="1"/><rect x="1346.5" y="349" width="19" height="4" rx="1"/></g><path d="M1334 366.5H1371.0Q1373.0 366.5 1373.3 368.5L1375.5 391.5Q1375.5 393.5 1373.5 393.5H1336.5Q1334.5 393.5 1334.2 391.5L1332 368.5Q1332 366.5 1334 366.5z" fill="none" stroke="#99989e" stroke-width="1.3"/><g fill="#aeadb2"><rect x="1344" y="377" width="20" height="10" rx="1.5"/></g><path d="M1346.5 377V373.5Q1346.5 369.5 1351 369.5Q1355 369.5 1355.5 373" stroke="#9a999f" stroke-width="2" fill="none"/><path d="M1339 403H1376.5Q1378.5 403 1378.8 405L1381 429Q1381 431 1379 431H1341.5Q1339.5 431 1339.2 429L1337 405Q1337 403 1339 403z" fill="none" stroke="#99989e" stroke-width="1.3"/><g stroke="#9a999f" stroke-width="1.4" fill="none"><path d="M1349 417L1354 409.5H1365L1370 417L1365 424.5H1354z"/><circle cx="1359.5" cy="417" r="3.8"/></g><g stroke="#c8c8ca" stroke-width="1.3" fill="none"><path d="M561 84L571 74H591V95L581 106H561zM561 84H581V106M581 84L591 74"/><circle cx="591" cy="99.5" r="7.3" fill="#3c3c42"/><path d="M586.5 99.5H595.5M591 95V104"/><path d="M606.5 74.5H634V102H606.5zM606.5 81.5H634M606.5 88.5H634M606.5 95.5H634M613.5 74.5V102M620.5 74.5V102M627.5 74.5V102"/><circle cx="633.5" cy="100" r="7.3" fill="#3c3c42"/><path d="M629 100H638M633.5 95.5V104.5"/><path d="M668 76.5L686 81.5L682 99L664 94z"/><path d="M652 105.5H684" stroke-width="2.2" stroke-linecap="round"/><path d="M653 100L663 90.5M653 93L653 100L660 97.5"/><rect x="695.5" y="75" width="32.5" height="32" /><rect x="700" y="79.5" width="24" height="7"/><rect x="700" y="90" width="8" height="13"/><rect x="710.5" y="90" width="13.5" height="5"/><rect x="710.5" y="97.5" width="13.5" height="5.5"/></g><text x="651" y="87" font-family="Liberation Sans" font-size="6.5" fill="#c8c8ca" textLength="15" lengthAdjust="spacingAndGlyphs">AUTO</text><g stroke="#55545b" stroke-width="1.2" fill="none"><path d="M749.5 106V74.5H762L766 78M754 106V80H770.5L775 84V108H754.5"/><path d="M762.5 87L766 91V98L762.5 102L759 98V91z"/><path d="M793 106V74.5H805L809 78M797 106V80H813.5L818 84V108H797.5"/><path d="M805 101V87H810.5Q813 87 813 91Q813 95 810.5 95H805"/><path d="M838 78.5H868M838 83H868M838 87.5H868M838 92H868M838 96.5H868M838 101H868"/><path d="M890.5 76V108" stroke="#6a696f" stroke-width="1.5"/></g><g stroke="#504f56" stroke-width="1.2" fill="none"><path d="M927 76L923.5 80.5H926V86H928V80.5H930.5zM927 108L923.5 103.5H926V98H928V103.5H930.5zM911 92L915.5 88.5V91H921V93H915.5V95.5zM943 92L938.5 88.5V91H933V93H938.5V95.5z"/><path d="M980 81A14 14 0 1 0 960 98M956 92L972 77L985 92L972 108z"/><path d="M979 78L987 80L983 86z"/><path d="M1002 89H1017V107H1002zM1012 93L1031 79M1024 79H1031V85"/><path d="M1002 86V75H1035V107H1020" stroke-dasharray="2 2.5"/><path d="M1062 76.5L1080 81.5L1076 99L1058 94zM1047 105.5H1080M1047 100L1056 89.5"/><path d="M1093 76H1123V89H1093zM1093 93H1123V106H1093z"/><path d="M1137 91H1160V108H1137zM1146 76H1170V99H1146z"/><path d="M1183 76H1215V107H1183zM1183 91H1198V107"/><path d="M1184 95L1188 91M1184 100L1193 91M1184 105L1197 92M1188 106L1197 97M1193 106L1197 102" stroke-width="0.9"/><path d="M1231 85L1240 76H1260V98L1251 107H1231zM1231 85H1251V107M1251 85L1260 76"/><path d="M1275 76H1300V82H1291V107H1284V82H1275zM1296 96H1304V107H1296z"/><path d="M1320 92L1332 80L1346 94L1334 106zM1322 86L1328 76M1340 100Q1346 104 1345 108H1350"/><path d="M1370.5 76V108" stroke="#6a696f" stroke-width="1.5"/></g><g stroke="#d2d2d4" stroke-width="1.4" fill="none"><path d="M1391.7 83.7H1405V96H1418.3V109.3H1391.7z"/><path d="M1391.7 96H1396Q1398 93 1400 96H1405V100Q1408 102 1405 104V109.3M1405 96V92Q1408 90 1405 88"/><path d="M1405 96H1409Q1411 93 1413 96"/><path d="M1413.5 74.5L1424.5 84L1414.5 93.5L1403.5 84z"/><path d="M1408 79L1405 76Q1402 77 1403.5 80"/></g></svg>
</body></html>
